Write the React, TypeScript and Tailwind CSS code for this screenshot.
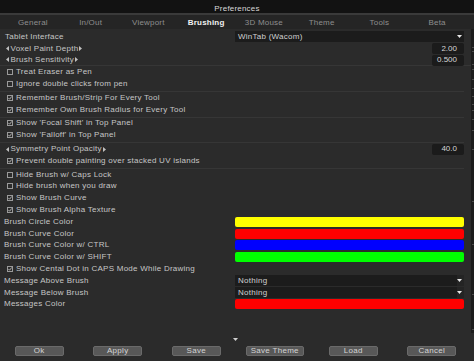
import React from "react";

const txt = "text-[8px] leading-none tracking-[0.25px] text-[#c6c6c6] whitespace-nowrap";

const tabs = ["General", "In/Out", "Viewport", "Brushing", "3D Mouse", "Theme", "Tools", "Beta"];
const buttons = [
  { label: "Ok", w: "w-[49px]" },
  { label: "Apply", w: "w-[49px]" },
  { label: "Save", w: "w-[49px]" },
  { label: "Save Theme", w: "w-[58px]" },
  { label: "Load", w: "w-[49px]" },
  { label: "Cancel", w: "w-[49px]" },
];
const ticks = [18, 22, 35, 40, 50, 59, 67, 75, 81, 90, 101, 120, 172, 215, 265, 300];

function Check({ label, on }: { label: string; on?: boolean }) {
  return (
    <div className="flex h-[11.8px] items-center pl-[7px]">
      <svg width="6" height="6" viewBox="0 0 6 6" className="shrink-0">
        <rect x="0.5" y="0.5" width="5" height="5" fill="none" stroke="#9a9a9a" />
        {on && <path d="M1.3 2.9 L2.6 4.2 L4.8 1.4" fill="none" stroke="#c0c0c0" strokeWidth="0.9" />}
      </svg>
      <span className={`ml-[3px] ${txt}`}>{label}</span>
    </div>
  );
}

function Stepper({ label, value, line }: { label: string; value: string; line?: boolean }) {
  return (
    <div className={`flex h-[11.8px] items-center pr-[7px] ${line ? "border-b border-[#363636]" : ""}`}>
      <div className="flex flex-1 items-center pl-[6px]">
        <svg width="3" height="5" viewBox="0 0 3 5" className="shrink-0">
          <path d="M3 0 L0 2.5 L3 5Z" fill="#c0c0c0" />
        </svg>
        <span className={`ml-[1.5px] ${txt}`}>{label}</span>
        <svg width="3" height="5" viewBox="0 0 3 5" className="ml-[1px] shrink-0">
          <path d="M0 0 L3 2.5 L0 5Z" fill="#c0c0c0" />
        </svg>
      </div>
      <div className="flex h-[11px] w-[32px] items-center justify-end rounded-[2px] bg-[#1b1b1b] pr-[7px] text-[8px] leading-none text-[#d6d6d6]">
        {value}
      </div>
    </div>
  );
}

function Arrow() {
  return (
    <svg width="5" height="3" viewBox="0 0 5 3" className="shrink-0">
      <path d="M0 0 L5 0 L2.5 3Z" fill="#e6e6e6" />
    </svg>
  );
}

function Dropdown({ label, value, inner }: { label: string; value: string; inner?: boolean }) {
  return (
    <div className="flex h-[11.8px] items-center pr-[7px]">
      <span className={`flex-1 ${inner ? "pl-[5px]" : "pl-[4px]"} ${txt}`}>{label}</span>
      <div className="flex h-[11px] w-[229px] items-center">
        <div className={`flex h-full flex-1 items-center bg-[#1c1c1c] pl-[3px] ${txt} text-[#d0d0d0]`}>{value}</div>
        <div className={`flex h-full w-[7px] items-center justify-start ${inner ? "bg-[#1c1c1c]" : "bg-[#242424]"}`}>
          <Arrow />
        </div>
      </div>
    </div>
  );
}

function ColorRow({ label, color }: { label: string; color: string }) {
  return (
    <div className="flex h-[11.8px] items-center pr-[7px]">
      <span className={`flex-1 pl-[4px] ${txt}`}>{label}</span>
      <div className={`h-[10px] w-[229px] rounded-[2px] ${color}`} />
    </div>
  );
}

function Sep() {
  return <div className="mr-[7px] h-[2px] border-b border-[#363636]" />;
}

export default function App() {
  return (
    <div className="flex h-[361px] w-[474px] flex-col overflow-hidden bg-[#2b2b2b] font-['Liberation_Sans',Arial,sans-serif]">
      {/* title */}
      <div className="flex h-[13px] justify-center bg-[#121212] pt-[5px]">
        <span className="text-[8px] leading-none tracking-[0.2px] text-[#d8d8d8]">Preferences</span>
      </div>
      <div className="h-[2px] bg-[#3a3a3a]" />
      {/* tabs */}
      <div className="grid h-[14px] grid-cols-8 bg-[#252525] pl-[4px] pr-[8px]">
        {tabs.map((t) => (
          <div
            key={t}
            className={`flex items-center justify-center pt-[1px] text-[8px] leading-none tracking-[0.2px] ${
              t === "Brushing" ? "font-bold text-[#f2f2f2]" : "text-[#8e8e8e]"
            }`}
          >
            {t}
          </div>
        ))}
      </div>

      {/* body */}
      <div className="flex flex-1">
        <div className="flex flex-1 flex-col pt-[2px]">
          <Dropdown label="Tablet Interface" value="WinTab (Wacom)" inner />
          <Stepper label="Voxel Paint Depth" value="2.00" />
          <Stepper label="Brush Sensitivity" value="0.500" line />
          <Check label="Treat Eraser as Pen" />
          <Check label="Ignore double clicks from pen" />
          <Sep />
          <Check label="Remember Brush/Strip For Every Tool" on />
          <Check label="Remember Own Brush Radius for Every Tool" on />
          <Sep />
          <Check label="Show 'Focal Shift' in Top Panel" on />
          <Check label="Show 'Falloff' in Top Panel" on />
          <Sep />
          <Stepper label="Symmetry Point Opacity" value="40.0" />
          <Check label="Prevent double painting over stacked UV islands" on />
          <Sep />
          <Check label="Hide Brush w/ Caps Lock" />
          <Check label="Hide brush when you draw" />
          <Check label="Show Brush Curve" on />
          <Check label="Show Brush Alpha Texture" on />
          <ColorRow label="Brush Circle Color" color="bg-[#ffff00]" />
          <ColorRow label="Brush Curve Color" color="bg-[#ff0000]" />
          <ColorRow label="Brush Curve Color w/ CTRL" color="bg-[#0000ff]" />
          <ColorRow label="Brush Curve Color w/ SHIFT" color="bg-[#00ff00]" />
          <Check label="Show Cental Dot in CAPS Mode While Drawing" on />
          <Dropdown label="Message Above Brush" value="Nothing" />
          <Dropdown label="Message Below Brush" value="Nothing" />
          <ColorRow label="Messages Color" color="bg-[#ff0000]" />
        </div>
        <svg width="3" height="304" viewBox="0 0 3 304" className="shrink-0">
          <rect x="0" y="0" width="3" height="304" fill="#1c1c1c" />
          {ticks.map((y) => (
            <rect key={y} x="1" y={y} width="2" height="1" fill="#4a4a4a" />
          ))}
        </svg>
      </div>

      {/* footer */}
      <div className="flex w-[471px] flex-col pb-[5px] pt-[5px]">
        <div className="flex h-[4px] justify-center">
          <svg width="5" height="3" viewBox="0 0 5 3">
            <path d="M0 0 L5 0 L2.5 3Z" fill="#d0d0d0" />
          </svg>
        </div>
        <div className="mt-[4px] grid h-[10px] grid-cols-6">
          {buttons.map((b) => (
            <div key={b.label} className="flex justify-center">
              <div
                className={`flex h-[10px] ${b.w} items-center justify-center rounded-[2px] border border-[#6a6a6a] bg-[#585858] text-[8px] leading-none tracking-[0.3px] text-[#d4d4d4]`}
              >
                {b.label}
              </div>
            </div>
          ))}
        </div>
      </div>
    </div>
  );
}
